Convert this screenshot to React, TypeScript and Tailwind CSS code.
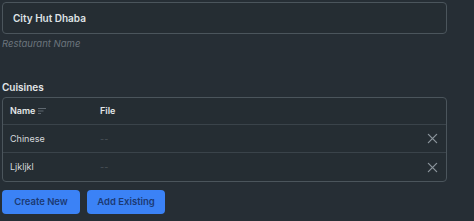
import React from "react";

const XIcon = () => (
  <svg width="11" height="11" viewBox="0 0 12 12" fill="none" stroke="#8b949c" strokeWidth="1.4" strokeLinecap="round">
    <path d="M1.5 1.5 L10.5 10.5 M10.5 1.5 L1.5 10.5" />
  </svg>
);

const SortIcon = () => (
  <svg width="8" height="6" viewBox="0 0 8 6" fill="#5f6870">
    <rect x="0" y="0" width="8" height="1" />
    <rect x="0" y="2.5" width="5.5" height="1" />
    <rect x="0" y="5" width="3" height="1" />
  </svg>
);

export default function App() {
  const rows = ["Chinese", "Ljkljkl"];
  return (
    <div
      className="w-[474px] h-[221px] overflow-hidden bg-[#262e35] pl-[2px] pr-[27px] pt-[2px]"
      style={{ fontFamily: "Inter, 'Noto Sans', sans-serif" }}
    >
      <div className="h-[32px] rounded-[4px] border border-[#4b555c] bg-[#252d33] flex items-center pl-[10px] text-[10px] font-semibold text-[#dfe3e6]">
        City Hut Dhaba
      </div>
      <div className="mt-[4px] text-[9.5px] italic text-[#6c757d] leading-[12px]">Restaurant Name</div>

      <div className="mt-[30px] text-[10px] font-semibold text-[#e3e6e8] leading-[14px]">Cuisines</div>
      <div className="mt-[3px] rounded-[4px] border border-[#4b555c] bg-[#252d33]">
        <div className="h-[27px] flex items-center border-b border-[#3a434a] text-[9px] font-semibold text-[#e3e6e8]">
          <div className="w-[97px] pl-[7px] flex items-center gap-[3px]">
            <span>Name</span>
            <SortIcon />
          </div>
          <div>File</div>
        </div>
        {rows.map((r, i) => (
          <div
            key={r}
            className={`h-[28px] flex items-center text-[9px] text-[#d5d9dc] ${i === 0 ? "border-b border-[#3a434a]" : ""}`}
          >
            <div className="w-[97px] pl-[7px]">{r}</div>
            <div className="flex-1 text-[#4a535a]">--</div>
            <div className="pr-[8px] flex items-center">
              <XIcon />
            </div>
          </div>
        ))}
      </div>

      <div className="mt-[8px] flex gap-[7px]">
        <button className="h-[24px] w-[78px] rounded-[4px] bg-[#3b82f6] text-[9.5px] font-semibold text-[#1b3a74]">
          Create New
        </button>
        <button className="h-[24px] w-[78px] rounded-[4px] bg-[#3b82f6] text-[9.5px] font-semibold text-[#1b3a74]">
          Add Existing
        </button>
      </div>
      <div className="mt-[4px] text-[9px] italic text-[#6c757d]">Tip: drag the rows to reorder</div>
    </div>
  );
}
